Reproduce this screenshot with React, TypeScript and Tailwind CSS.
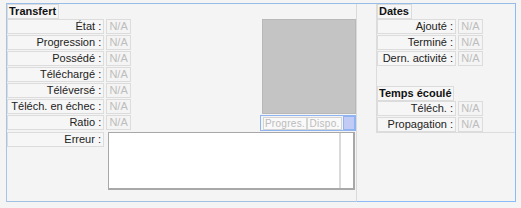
import React from 'react';

const font = { fontFamily: '"Liberation Sans", Arial, sans-serif' };

const Header: React.FC<{ text: string; width: string }> = ({ text, width }) => (
  <div
    className={`h-[15px] ${width} border border-[#dcdcdc] bg-[#f6f6f6] text-[11px] font-bold leading-[13px] text-[#111] pl-[1px]`}
  >
    {text}
  </div>
);

const Row: React.FC<{ label: string; labelWidth: string }> = ({ label, labelWidth }) => (
  <div className="flex h-[15px] mb-[1px]">
    <div
      className={`${labelWidth} h-[15px] border border-[#dcdcdc] bg-[#f6f6f6] text-right text-[11px] leading-[13px] text-[#222] pr-[2px] whitespace-nowrap`}
    >
      {label} :
    </div>
    <div className="ml-[2px] w-[25px] h-[15px] border border-[#dcdcdc] text-center text-[11px] leading-[13px] text-[#bdbdbd]">
      N/A
    </div>
  </div>
);

const transfertRows = [
  'État',
  'Progression',
  'Possédé',
  'Téléchargé',
  'Téléversé',
  'Téléch. en échec',
  'Ratio',
];

export default function App() {
  return (
    <div className="w-[521px] h-[208px] bg-[#f4f4f4] pt-[3px] pl-[6px]" style={font}>
      <div className="flex w-[510px] h-[199px] border-t border-l border-r border-t-[#98bce8] border-l-[#a6c4e6] border-r-[#8cbcf8]">
        {/* Left: Transfert */}
        <div className="w-[350px] h-[198px] border-r border-r-[#dadada] border-b border-b-[#a4c0e0] flex flex-col">
          <Header text="Transfert" width="w-[52px]" />
          <div className="flex">
            <div className="w-[124px] flex flex-col">
              {transfertRows.map((r) => (
                <Row key={r} label={r} labelWidth="w-[98px]" />
              ))}
            </div>
            <div className="flex-1" />
            <div className="w-[96px] flex flex-col items-end">
              <div className="w-[94px] h-[95px] bg-[#c4c4c4] border border-[#b8b8b8]" />
              <div className="mt-[1px] w-[96px] h-[16px] border border-[#8fb4f0] flex items-center pl-[2px]">
                <div className="w-[44px] h-[13px] border border-[#d4d4d4] bg-[#f9f9f9] text-[10px] leading-[11px] text-[#bcbcbc] text-center tracking-[0.3px]">
                  Progres.
                </div>
                <div className="w-[35px] h-[13px] border border-[#d4d4d4] bg-[#f9f9f9] text-[10px] leading-[11px] text-[#bcbcbc] text-center tracking-[0.3px]">
                  Dispo.
                </div>
                <div className="ml-[1px] flex-1 h-[14px] bg-[#c2cbf5] border border-[#8fb4f0]" />
              </div>
            </div>
          </div>
          <div className="flex mt-[1px]">
            <div className="w-[97px] h-[15px] border border-[#dcdcdc] bg-[#f6f6f6] text-right text-[11px] leading-[13px] text-[#222] pr-[2px]">
              Erreur :
            </div>
            <div className="ml-[4px] w-[247px] h-[58px] bg-white border border-[#a8a8a8] border-r-2 border-b-2 flex justify-end">
              <div className="w-[14px] h-full border-l-2 border-l-[#dadada]" />
            </div>
          </div>
        </div>

        {/* Right: Dates */}
        <div className="flex-1 h-[198px] border-b border-b-[#8cbcf8]">
          <div className="ml-[19px] h-[129px] border-l border-b border-[#dcdcdc] flex flex-col">
            <Header text="Dates" width="w-[35px]" />
            <Row label="Ajouté" labelWidth="w-[79px]" />
            <Row label="Terminé" labelWidth="w-[79px]" />
            <Row label="Dern. activité" labelWidth="w-[79px]" />
            <div className="mt-[19px]">
              <Header text="Temps écoulé" width="w-[77px]" />
            </div>
            <Row label="Téléch." labelWidth="w-[79px]" />
            <Row label="Propagation" labelWidth="w-[79px]" />
          </div>
        </div>
      </div>
    </div>
  );
}
